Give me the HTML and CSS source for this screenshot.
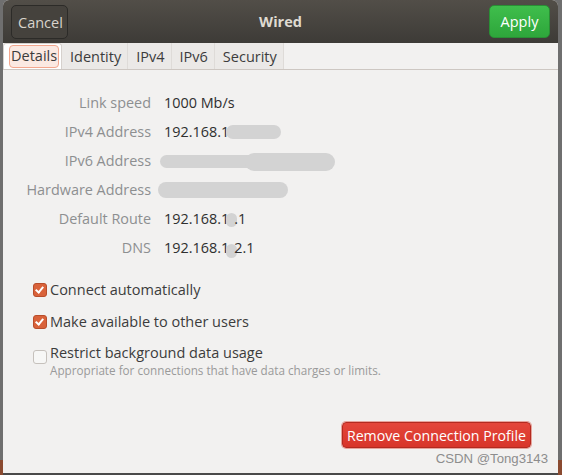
FILE: index.html
```html
<!DOCTYPE html>
<html>
<head>
<meta charset="utf-8">
<link rel="stylesheet" href="styles.css">
</head>
<body>
<div class="frame">
  <div class="window">
    <div class="headerbar">
      <button class="hb-btn cancel">Cancel</button>
      <div class="title">Wired</div>
      <button class="hb-btn apply">Apply</button>
    </div>
    <div class="tabs">
      <div class="tab active"><span class="focus">Details</span></div>
      <div class="tab">Identity</div>
      <div class="tab">IPv4</div>
      <div class="tab">IPv6</div>
      <div class="tab">Security</div>
      <div class="tab-rest"></div>
    </div>
    <div class="content">
      <div class="details">
        <div class="label">Link speed</div><div class="value">1000 Mb/s</div>
        <div class="label">IPv4 Address</div><div class="value"><span>192.168.1</span><span class="blur b-ipv4"></span></div>
        <div class="label">IPv6 Address</div><div class="value"><span class="blur b-ipv6"></span><span class="blur b-ipv6b"></span></div>
        <div class="label">Hardware Address</div><div class="value"><span class="blur b-hw"></span></div>
        <div class="label">Default Route</div><div class="value"><span>192.168.1</span><span class="dot"></span><span>.1</span></div>
        <div class="label">DNS</div><div class="value"><span>192.168.1</span><span class="dot d2"></span><span>2.1</span></div>
      </div>
      <div class="checks">
        <label class="check"><span class="box on"></span><span class="ctext">Connect automatically</span></label>
        <label class="check"><span class="box on"></span><span class="ctext">Make available to other users</span></label>
        <label class="check top"><span class="box"></span><span class="ctext">Restrict background data usage<span class="sub">Appropriate for connections that have data charges or limits.</span></span></label>
      </div>
      <div class="actions">
        <button class="remove">Remove Connection Profile</button>
      </div>
      <div class="watermark">CSDN @Tong3143</div>
    </div>
  </div>
</div>
</body>
</html>
```

FILE: styles.css
```css
html, body {
  margin: 0;
  padding: 0;
}
body {
  width: 562px;
  height: 475px;
  overflow: hidden;
  background: #6f6f6f;
  font-family: "Open Sans", "Noto Sans", sans-serif;
}
.frame {
  padding: 0 4px 0 3px;
  height: 475px;
  box-sizing: border-box;
  background: linear-gradient(to bottom, #6f6f6f 0, #6f6f6f 460px, #8a4a30 460px);
}
.window {
  height: 473px;
  display: flex;
  flex-direction: column;
  background: #f2f1f0;
  border-radius: 6px 6px 0 0;
  overflow: hidden;
  border-bottom: 2px solid #4a4a4a;
}
.headerbar {
  height: 43px;
  flex: none;
  display: flex;
  align-items: center;
  justify-content: space-between;
  padding: 0 8px 0 8px;
  background: linear-gradient(to bottom, #524e48, #3d3b37);
  position: relative;
  box-sizing: border-box;
}
.hb-btn {
  font-family: inherit;
  font-size: 14.5px;
  height: 34px;
  border-radius: 5px;
  padding: 0 6px;
  cursor: default;
}
.cancel {
  background: #45423d;
  border: 1px solid #2c2b28;
  color: #d8d4cc;
  width: 57px;
  margin-top: 1px;
}
.apply {
  background: linear-gradient(to bottom, #3fbe4c, #2ea63b);
  border: 1px solid #2a8e35;
  color: #ffffff;
  width: 61px;
  height: 33px;
  margin-right: 0;
}
.title {
  position: absolute;
  left: 0;
  right: 0;
  text-align: center;
  color: #dfdbd2;
  font-weight: bold;
  font-size: 14.5px;
  pointer-events: none;
}
.tabs {
  display: flex;
  height: 27px;
  flex: none;
  box-sizing: border-box;
  border-bottom: 1px solid #cdc7c2;
  background: #f2f1f0;
  font-size: 14.5px;
  color: #3c3c3c;
}
.tab {
  display: flex;
  align-items: center;
  padding: 0 6px 0 8px;
  border-right: 1px solid #dedbd8;
  background: #ebe9e7;
}
.tab.active {
  background: #ffffff;
  padding: 0 5px 0 5px;
  border-radius: 3px 3px 0 0;
  border: 1px solid #d6d1cd;
  border-bottom: none;
  width: 59px;
  box-sizing: border-box;
}
.focus {
  border: 1px solid #f3a78e;
  background: #fbe9e2;
  border-radius: 4px;
  padding: 1px 1px 2px 1px;
  line-height: 18px;
}
.tab-rest {
  flex: 1;
  background: #f2f1f0;
}
.content {
  flex: 1;
  position: relative;
  padding-top: 18px;
}
.details {
  display: grid;
  grid-template-columns: 148px auto;
  column-gap: 13px;
  grid-auto-rows: 29px;
  align-items: center;
  font-size: 14.4px;
}
.label {
  text-align: right;
  color: #8d8f90;
}
.value {
  color: #2f2f2f;
  display: flex;
  align-items: center;
  position: relative;
}
.blur {
  display: inline-block;
  background: #d3d3d3;
  border-radius: 10px;
}
.b-ipv4 {
  width: 55px;
  height: 14px;
  margin-left: -3px;
}
.b-ipv6 {
  width: 100px;
  height: 13px;
  margin-left: -4px;
  margin-top: 2px;
}
.b-ipv6b {
  width: 90px;
  height: 18px;
  margin-left: -15px;
  margin-top: 2px;
}
.b-hw {
  width: 130px;
  height: 16px;
  margin-left: -6px;
}
.dot {
  display: inline-block;
  width: 11px;
  height: 14px;
  background: #d3d3d3;
  border-radius: 6px;
  margin: 3px -3px 0 -3px;
}
.d2 {
  margin-top: 6px;
}
.checks {
  margin-top: 19px;
  padding-left: 30px;
  display: flex;
  flex-direction: column;
  gap: 14px;
  font-size: 14.5px;
  color: #3c3c3c;
}
.check {
  display: flex;
  align-items: center;
  gap: 3px;
  height: 18px;
}
.check.top {
  align-items: flex-start;
  margin-top: -1px;
}
.box {
  width: 12px;
  height: 12px;
  border-radius: 3px;
  border: 1px solid #c6c1bc;
  background: #f7f7f6;
  flex: none;
  position: relative;
}
.check.top .box {
  margin-top: 6px;
}
.box.on {
  background: #d9623a;
  border-color: #b84d2b;
}
.box.on::after {
  content: "";
  position: absolute;
  left: 3px;
  top: 1px;
  width: 3px;
  height: 6px;
  border-right: 2px solid #fff;
  border-bottom: 2px solid #fff;
  transform: rotate(40deg);
}
.ctext {
  display: flex;
  flex-direction: column;
  line-height: 18px;
}
.sub {
  font-size: 11.7px;
  color: #9a9a9a;
  line-height: 14px;
  margin-top: 1px;
}
.actions {
  position: absolute;
  right: 27px;
  bottom: 25px;
}
.remove {
  font-family: inherit;
  font-size: 14.2px;
  color: #ffffff;
  background: linear-gradient(to bottom, #e4463a, #d8352a);
  border: 1px solid #b32a20;
  border-radius: 4px;
  height: 26px;
  padding: 0 4px;
  box-shadow: 0 0 0 1px #e7a49c;
}
.watermark {
  position: absolute;
  right: 10px;
  bottom: 7px;
  font-family: "Liberation Sans", Arial, sans-serif;
  font-size: 13.2px;
  color: #8d8d8d;
}
```
